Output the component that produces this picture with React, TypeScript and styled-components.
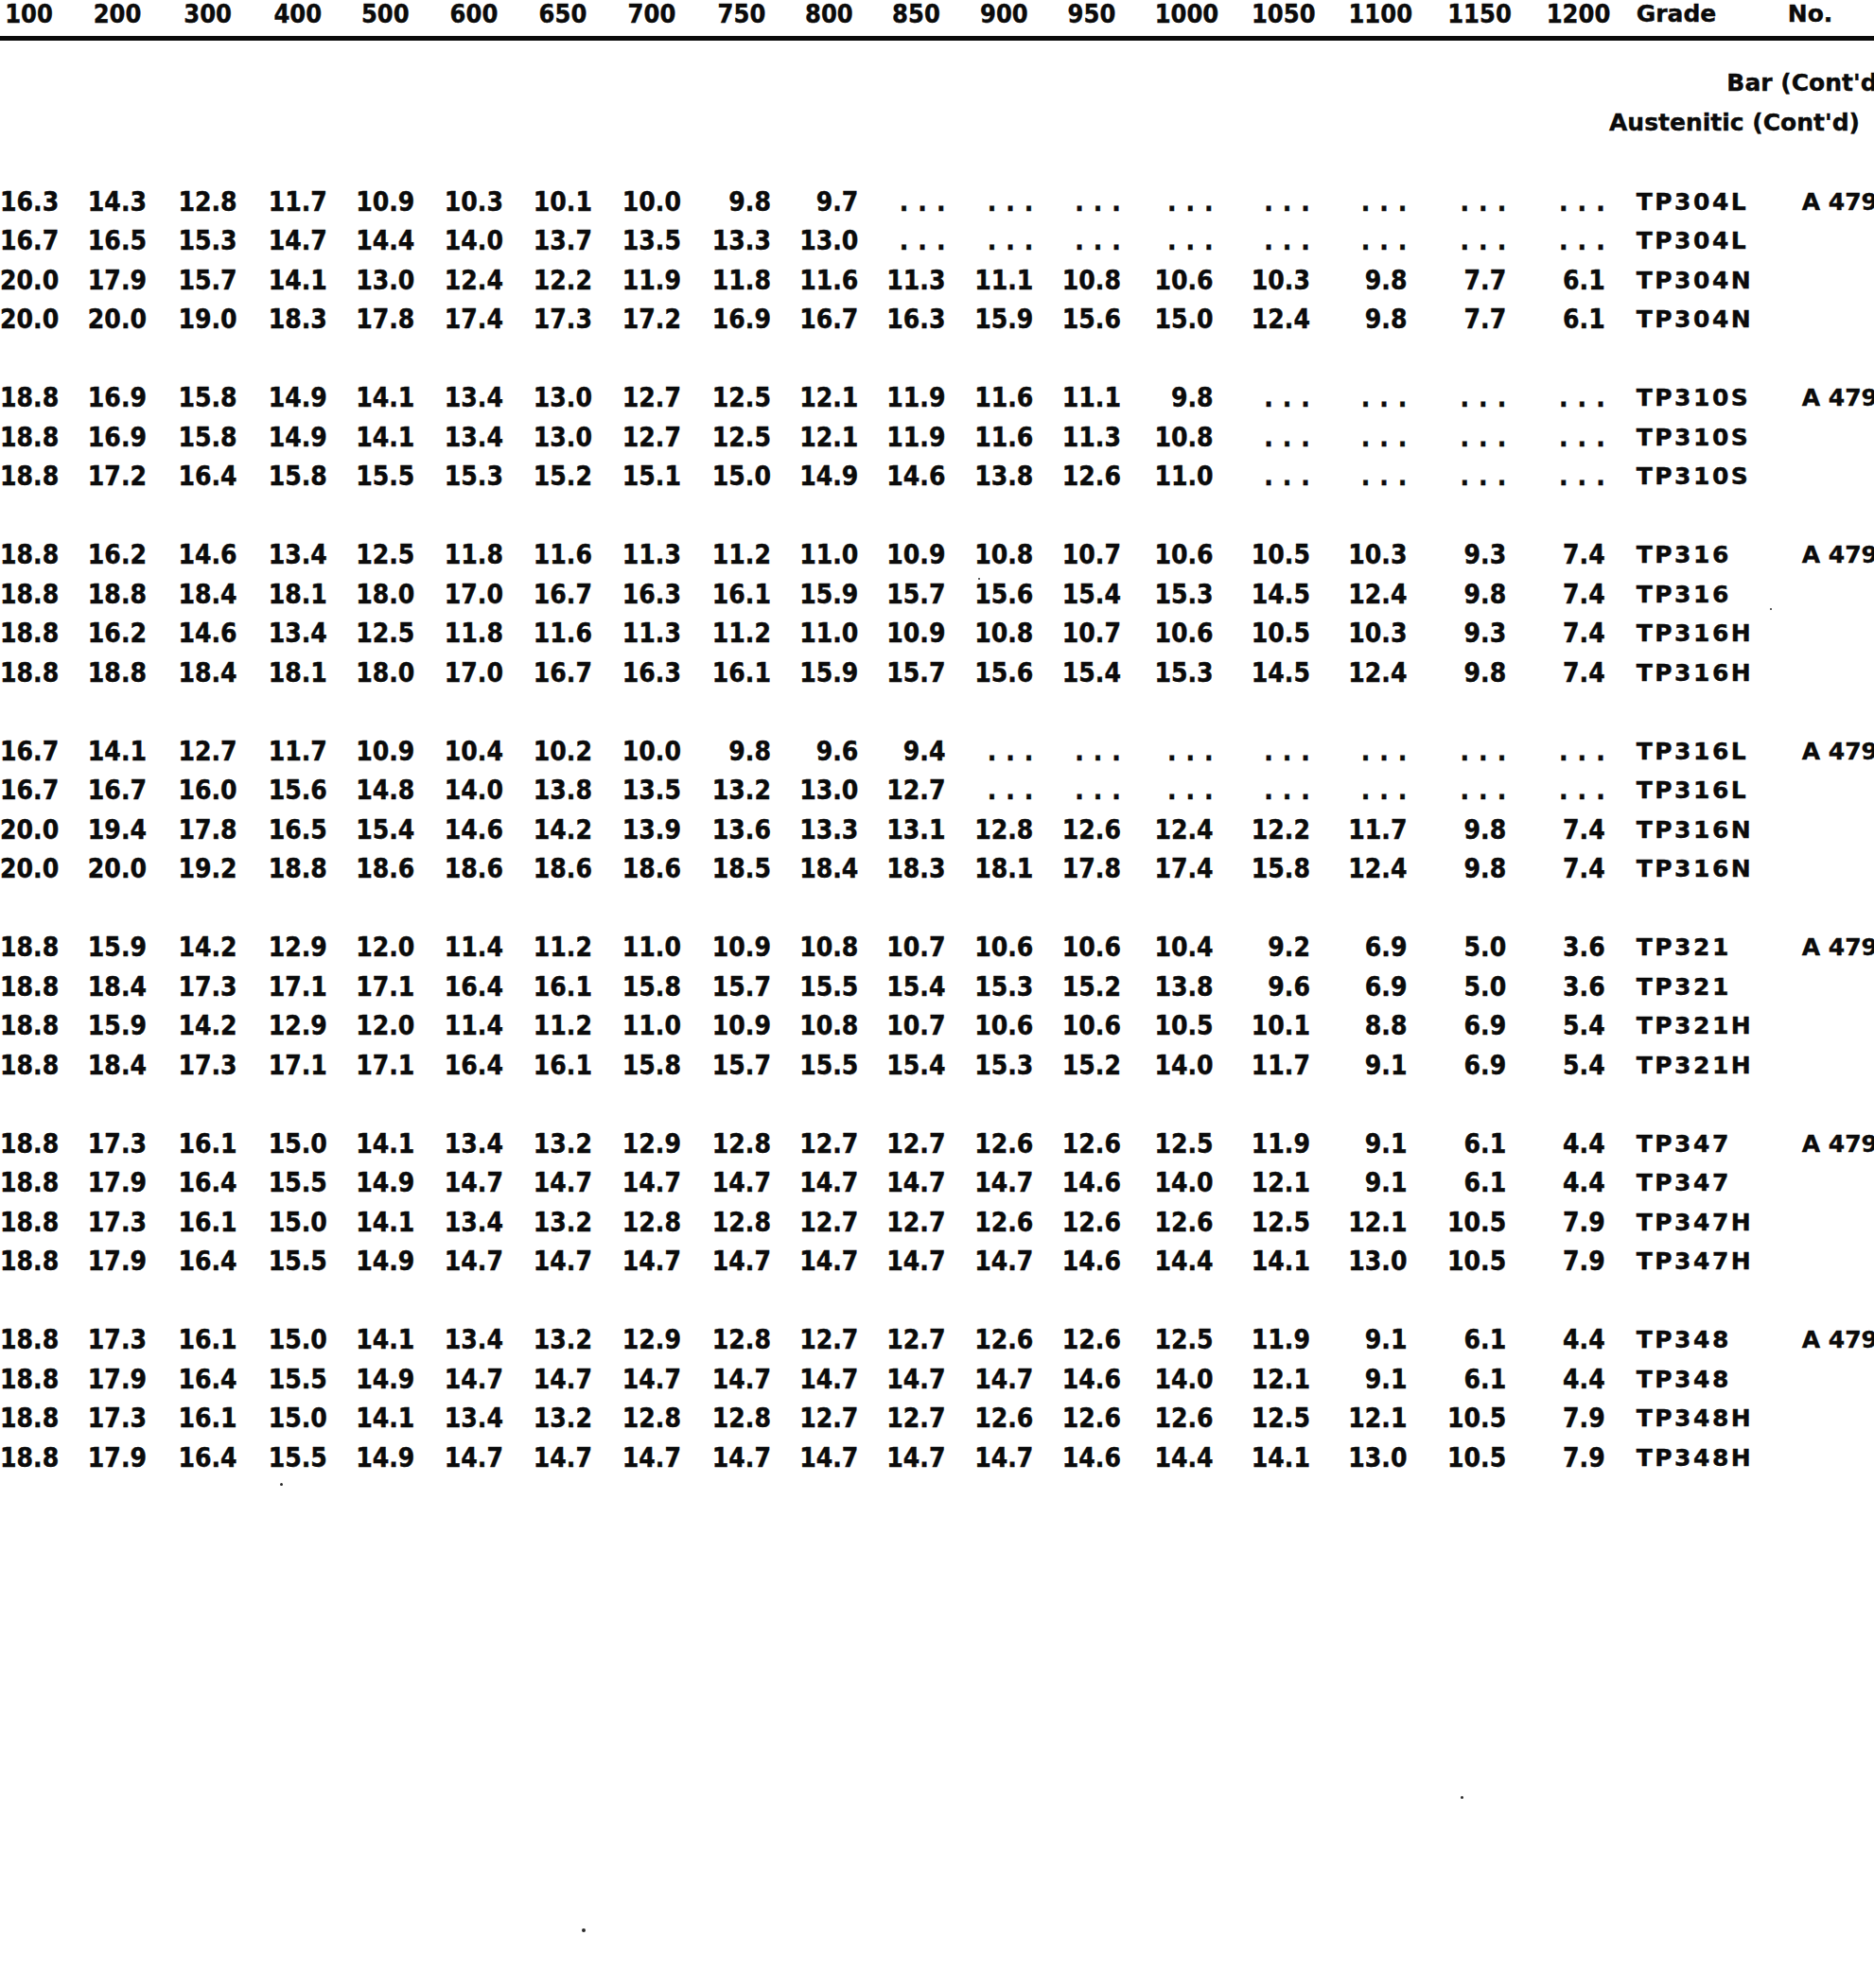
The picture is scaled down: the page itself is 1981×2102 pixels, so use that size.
import styled, { createGlobalStyle } from 'styled-components'

const GlobalStyle = createGlobalStyle`
  html, body {
    margin: 0;
    padding: 0;
    background: #ffffff;
    overflow: hidden;
  }
  body {
    color: #0b0b0b;
  }
`

const COLUMN_WIDTHS = [
  61.5, 93.5, 95.6, 95.2, 92.5, 93.7, 94, 94, 95, 92.4, 92.1, 92.9, 92.6, 97.7, 102.3, 102.5,
  104.8, 104.5,
]
const GRID = `${COLUMN_WIDTHS.map((w) => `${w}px`).join(' ')} 208px 1fr`

const TEMPS = [
  '100', '200', '300', '400', '500', '600', '650', '700', '750', '800', '850', '900', '950',
  '1000', '1050', '1100', '1150', '1200',
]

// '-' stands for the dotted "no value" mark
type Group = { no: string; rows: string[] }

const tp347 = [
  '18.8 17.3 16.1 15.0 14.1 13.4 13.2 12.9 12.8 12.7 12.7 12.6 12.6 12.5 11.9 9.1 6.1 4.4',
  '18.8 17.9 16.4 15.5 14.9 14.7 14.7 14.7 14.7 14.7 14.7 14.7 14.6 14.0 12.1 9.1 6.1 4.4',
  '18.8 17.3 16.1 15.0 14.1 13.4 13.2 12.8 12.8 12.7 12.7 12.6 12.6 12.6 12.5 12.1 10.5 7.9',
  '18.8 17.9 16.4 15.5 14.9 14.7 14.7 14.7 14.7 14.7 14.7 14.7 14.6 14.4 14.1 13.0 10.5 7.9',
]

const GROUPS: Group[] = [
  {
    no: 'A 479',
    rows: [
      '16.3 14.3 12.8 11.7 10.9 10.3 10.1 10.0 9.8 9.7 - - - - - - - - TP304L',
      '16.7 16.5 15.3 14.7 14.4 14.0 13.7 13.5 13.3 13.0 - - - - - - - - TP304L',
      '20.0 17.9 15.7 14.1 13.0 12.4 12.2 11.9 11.8 11.6 11.3 11.1 10.8 10.6 10.3 9.8 7.7 6.1 TP304N',
      '20.0 20.0 19.0 18.3 17.8 17.4 17.3 17.2 16.9 16.7 16.3 15.9 15.6 15.0 12.4 9.8 7.7 6.1 TP304N',
    ],
  },
  {
    no: 'A 479',
    rows: [
      '18.8 16.9 15.8 14.9 14.1 13.4 13.0 12.7 12.5 12.1 11.9 11.6 11.1 9.8 - - - - TP310S',
      '18.8 16.9 15.8 14.9 14.1 13.4 13.0 12.7 12.5 12.1 11.9 11.6 11.3 10.8 - - - - TP310S',
      '18.8 17.2 16.4 15.8 15.5 15.3 15.2 15.1 15.0 14.9 14.6 13.8 12.6 11.0 - - - - TP310S',
    ],
  },
  {
    no: 'A 479',
    rows: [
      '18.8 16.2 14.6 13.4 12.5 11.8 11.6 11.3 11.2 11.0 10.9 10.8 10.7 10.6 10.5 10.3 9.3 7.4 TP316',
      '18.8 18.8 18.4 18.1 18.0 17.0 16.7 16.3 16.1 15.9 15.7 15.6 15.4 15.3 14.5 12.4 9.8 7.4 TP316',
      '18.8 16.2 14.6 13.4 12.5 11.8 11.6 11.3 11.2 11.0 10.9 10.8 10.7 10.6 10.5 10.3 9.3 7.4 TP316H',
      '18.8 18.8 18.4 18.1 18.0 17.0 16.7 16.3 16.1 15.9 15.7 15.6 15.4 15.3 14.5 12.4 9.8 7.4 TP316H',
    ],
  },
  {
    no: 'A 479',
    rows: [
      '16.7 14.1 12.7 11.7 10.9 10.4 10.2 10.0 9.8 9.6 9.4 - - - - - - - TP316L',
      '16.7 16.7 16.0 15.6 14.8 14.0 13.8 13.5 13.2 13.0 12.7 - - - - - - - TP316L',
      '20.0 19.4 17.8 16.5 15.4 14.6 14.2 13.9 13.6 13.3 13.1 12.8 12.6 12.4 12.2 11.7 9.8 7.4 TP316N',
      '20.0 20.0 19.2 18.8 18.6 18.6 18.6 18.6 18.5 18.4 18.3 18.1 17.8 17.4 15.8 12.4 9.8 7.4 TP316N',
    ],
  },
  {
    no: 'A 479',
    rows: [
      '18.8 15.9 14.2 12.9 12.0 11.4 11.2 11.0 10.9 10.8 10.7 10.6 10.6 10.4 9.2 6.9 5.0 3.6 TP321',
      '18.8 18.4 17.3 17.1 17.1 16.4 16.1 15.8 15.7 15.5 15.4 15.3 15.2 13.8 9.6 6.9 5.0 3.6 TP321',
      '18.8 15.9 14.2 12.9 12.0 11.4 11.2 11.0 10.9 10.8 10.7 10.6 10.6 10.5 10.1 8.8 6.9 5.4 TP321H',
      '18.8 18.4 17.3 17.1 17.1 16.4 16.1 15.8 15.7 15.5 15.4 15.3 15.2 14.0 11.7 9.1 6.9 5.4 TP321H',
    ],
  },
  {
    no: 'A 479',
    rows: [
      `${tp347[0]} TP347`,
      `${tp347[1]} TP347`,
      `${tp347[2]} TP347H`,
      `${tp347[3]} TP347H`,
    ],
  },
  {
    no: 'A 479',
    rows: [
      `${tp347[0]} TP348`,
      `${tp347[1]} TP348`,
      `${tp347[2]} TP348H`,
      `${tp347[3]} TP348H`,
    ],
  },
]

const SPECKS = [
  { x: 296, y: 1568, size: 3 },
  { x: 615, y: 2039, size: 4 },
  { x: 1544, y: 1899, size: 3 },
  { x: 1871, y: 643, size: 2 },
  { x: 1034, y: 611, size: 2 },
]

const sans = `"DejaVu Sans", "Liberation Sans", sans-serif`

const Page = styled.div`
  position: relative;
  width: 1981px;
  height: 2102px;
  overflow: hidden;
  background: #ffffff;
  -webkit-text-stroke: 0.4px #0b0b0b;
`

const HeaderRow = styled.div`
  display: grid;
  grid-template-columns: ${GRID};
  height: 30px;
  line-height: 30px;
  padding-bottom: 8px;
  border-bottom: 5px solid #0b0b0b;
`

const HeadCell = styled.div`
  display: flex;
  justify-content: flex-end;
`

const HeadNum = styled.span`
  width: 62px;
  flex: 0 0 62px;
  text-align: center;
  font-family: ${sans};
  font-stretch: condensed;
  font-weight: 700;
  font-size: 27px;
`

const HeadLabel = styled.div<{ $shift: number }>`
  padding-left: ${({ $shift }) => Math.max($shift, 0)}px;
  text-indent: ${({ $shift }) => Math.min($shift, 0)}px;
  font-family: ${sans};
  font-weight: 700;
  font-size: 25px;
  white-space: nowrap;
`

const Captions = styled.div`
  margin-top: 24px;
  margin-bottom: 42.5px;
  display: flex;
  flex-direction: column;
  align-items: flex-end;
`

const Caption = styled.div<{ $right: number }>`
  margin-right: ${({ $right }) => $right}px;
  line-height: 41.5px;
  font-family: ${sans};
  font-weight: 700;
  font-size: 25px;
  white-space: nowrap;
`

const GroupBlock = styled.div`
  margin-bottom: 41.5px;
`

const Row = styled.div`
  display: grid;
  grid-template-columns: ${GRID};
  line-height: 41.5px;
  height: 41.5px;
`

const NumCell = styled.div`
  text-align: right;
  font-family: ${sans};
  font-stretch: condensed;
  font-weight: 700;
  font-size: 28px;
  white-space: nowrap;
`

const Dots = styled.span`
  display: inline-block;
  letter-spacing: 10px;
  margin-right: -10px;
`

const GradeCell = styled.div`
  padding-left: 33px;
  font-family: ${sans};
  font-weight: 700;
  font-size: 25px;
  letter-spacing: 2.5px;
  white-space: nowrap;
`

const NoCell = styled.div`
  font-family: ${sans};
  font-weight: 700;
  font-size: 25px;
  white-space: nowrap;
`

const Speck = styled.span`
  position: absolute;
  border-radius: 50%;
  background: #2a2a2a;
`

function TableRow({ line, no }: { line: string; no?: string }) {
  const parts = line.split(' ')
  const values = parts.slice(0, 18)
  const grade = parts[18]
  return (
    <Row>
      {values.map((v, i) => (
        <NumCell key={i}>{v === '-' ? <Dots>...</Dots> : v}</NumCell>
      ))}
      <GradeCell>{grade}</GradeCell>
      <NoCell>{no ?? ''}</NoCell>
    </Row>
  )
}

export default function App() {
  return (
    <Page>
      <GlobalStyle />
      <HeaderRow>
        {TEMPS.map((t) => (
          <HeadCell key={t}>
            <HeadNum>{t}</HeadNum>
          </HeadCell>
        ))}
        <HeadLabel $shift={33}>Grade</HeadLabel>
        <HeadLabel $shift={-15}>No.</HeadLabel>
      </HeaderRow>
      <Captions>
        <Caption $right={-15}>Bar (Cont'd)</Caption>
        <Caption $right={15}>Austenitic (Cont'd)</Caption>
      </Captions>
      {GROUPS.map((g, gi) => (
        <GroupBlock key={gi}>
          {g.rows.map((r, ri) => (
            <TableRow key={ri} line={r} no={ri === 0 ? g.no : undefined} />
          ))}
        </GroupBlock>
      ))}
      {SPECKS.map((s, i) => (
        <Speck key={i} style={{ left: s.x, top: s.y, width: s.size, height: s.size }} />
      ))}
    </Page>
  )
}
